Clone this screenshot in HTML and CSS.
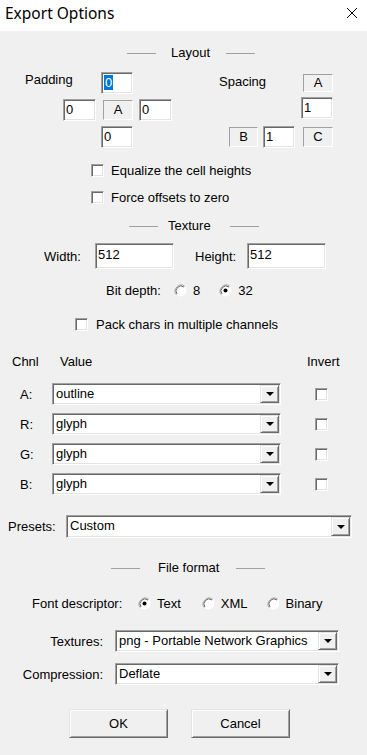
FILE: index.html
```html
<!DOCTYPE html>
<html lang="en">
<head>
  <meta charset="UTF-8" />
  <meta name="viewport" content="width=device-width, initial-scale=1.0"/>
  <title>Export Options</title>
  <link rel="stylesheet" href="styles.css">
</head>
<body>
  <div class="titlebar">
    <span class="title">Export Options</span>
    <svg class="close" width="12" height="12" viewBox="0 0 12 12"><path d="M1 1L11 11M11 1L1 11" stroke="#000" stroke-width="1" fill="none"/></svg>
  </div>

  <div class="dialog">
    <div class="group-title gt-layout">
      <span class="rule"></span><span class="gt-text">Layout</span><span class="rule"></span>
    </div>

    <div class="layout-block">
      <div class="pad-grid">
        <span class="pad-label">Padding</span>
        <div class="edit pad-top"><span class="sel">0</span></div>
        <div class="edit pad-left">0</div>
        <div class="static pad-a">A</div>
        <div class="edit pad-right">0</div>
        <div class="edit pad-bottom">0</div>
      </div>
      <div class="spc-grid">
        <span class="spc-label">Spacing</span>
        <div class="static spc-a">A</div>
        <div class="edit spc-v">1</div>
        <div class="static spc-b">B</div>
        <div class="edit spc-h">1</div>
        <div class="static spc-c">C</div>
      </div>
    </div>

    <div class="check-row row-equalize"><span class="check"></span><span>Equalize the cell heights</span></div>
    <div class="check-row row-offsets"><span class="check"></span><span>Force offsets to zero</span></div>

    <div class="group-title gt-texture">
      <span class="rule"></span><span class="gt-text">Texture</span><span class="rule"></span>
    </div>

    <div class="size-row">
      <span class="lbl-width">Width:</span>
      <div class="edit edit-big">512</div>
      <span class="lbl-height">Height:</span>
      <div class="edit edit-big">512</div>
    </div>

    <div class="bit-row">
      <span class="lbl-bit">Bit depth:</span>
      <span class="opt opt-8">
        <svg class="radio" width="13" height="13" viewBox="0 0 13 13"><circle cx="6.5" cy="6.5" r="6" fill="#fff"/><path d="M2.3 10.7A6 6 0 0 1 10.7 2.3" stroke="#a0a0a0" fill="none"/><path d="M3 10A5 5 0 0 1 10 3" stroke="#696969" fill="none"/></svg>
        <span>8</span>
      </span>
      <span class="opt opt-32">
        <svg class="radio" width="13" height="13" viewBox="0 0 13 13"><circle cx="6.5" cy="6.5" r="6" fill="#fff"/><path d="M2.3 10.7A6 6 0 0 1 10.7 2.3" stroke="#a0a0a0" fill="none"/><path d="M3 10A5 5 0 0 1 10 3" stroke="#696969" fill="none"/><circle cx="6.5" cy="6.5" r="2" fill="#000"/></svg>
        <span>32</span>
      </span>
    </div>

    <div class="check-row row-pack"><span class="check"></span><span>Pack chars in multiple channels</span></div>

    <div class="chnl-head">
      <span class="h-chnl">Chnl</span>
      <span class="h-value">Value</span>
      <span class="h-invert">Invert</span>
    </div>

    <div class="channels">
      <div class="chan">
        <span class="chan-lbl">A:</span>
        <div class="combo chan-combo"><span class="combo-val">outline</span><span class="drop"><svg width="8" height="4" viewBox="0 0 8 4"><path d="M0 0H8L4 4Z" fill="#000"/></svg></span></div>
        <span class="check chan-check"></span>
      </div>
      <div class="chan">
        <span class="chan-lbl">R:</span>
        <div class="combo chan-combo"><span class="combo-val">glyph</span><span class="drop"><svg width="8" height="4" viewBox="0 0 8 4"><path d="M0 0H8L4 4Z" fill="#000"/></svg></span></div>
        <span class="check chan-check"></span>
      </div>
      <div class="chan">
        <span class="chan-lbl">G:</span>
        <div class="combo chan-combo"><span class="combo-val">glyph</span><span class="drop"><svg width="8" height="4" viewBox="0 0 8 4"><path d="M0 0H8L4 4Z" fill="#000"/></svg></span></div>
        <span class="check chan-check"></span>
      </div>
      <div class="chan">
        <span class="chan-lbl">B:</span>
        <div class="combo chan-combo"><span class="combo-val">glyph</span><span class="drop"><svg width="8" height="4" viewBox="0 0 8 4"><path d="M0 0H8L4 4Z" fill="#000"/></svg></span></div>
        <span class="check chan-check"></span>
      </div>
    </div>

    <div class="presets-row">
      <span class="lbl-presets">Presets:</span>
      <div class="combo presets-combo"><span class="combo-val">Custom</span><span class="drop"><svg width="8" height="4" viewBox="0 0 8 4"><path d="M0 0H8L4 4Z" fill="#000"/></svg></span></div>
    </div>

    <div class="group-title gt-file">
      <span class="rule"></span><span class="gt-text">File format</span><span class="rule"></span>
    </div>

    <div class="fd-row">
      <span class="lbl-fd">Font descriptor:</span>
      <span class="opt">
        <svg class="radio" width="13" height="13" viewBox="0 0 13 13"><circle cx="6.5" cy="6.5" r="6" fill="#fff"/><path d="M2.3 10.7A6 6 0 0 1 10.7 2.3" stroke="#a0a0a0" fill="none"/><path d="M3 10A5 5 0 0 1 10 3" stroke="#696969" fill="none"/><circle cx="6.5" cy="6.5" r="2" fill="#000"/></svg>
        <span>Text</span>
      </span>
      <span class="opt opt-xml">
        <svg class="radio" width="13" height="13" viewBox="0 0 13 13"><circle cx="6.5" cy="6.5" r="6" fill="#fff"/><path d="M2.3 10.7A6 6 0 0 1 10.7 2.3" stroke="#a0a0a0" fill="none"/><path d="M3 10A5 5 0 0 1 10 3" stroke="#696969" fill="none"/></svg>
        <span>XML</span>
      </span>
      <span class="opt opt-bin">
        <svg class="radio" width="13" height="13" viewBox="0 0 13 13"><circle cx="6.5" cy="6.5" r="6" fill="#fff"/><path d="M2.3 10.7A6 6 0 0 1 10.7 2.3" stroke="#a0a0a0" fill="none"/><path d="M3 10A5 5 0 0 1 10 3" stroke="#696969" fill="none"/></svg>
        <span>Binary</span>
      </span>
    </div>

    <div class="format-row row-textures">
      <span class="lbl-format">Textures:</span>
      <div class="combo format-combo"><span class="combo-val">png - Portable Network Graphics</span><span class="drop"><svg width="8" height="4" viewBox="0 0 8 4"><path d="M0 0H8L4 4Z" fill="#000"/></svg></span></div>
    </div>
    <div class="format-row row-compression">
      <span class="lbl-format">Compression:</span>
      <div class="combo format-combo"><span class="combo-val">Deflate</span><span class="drop"><svg width="8" height="4" viewBox="0 0 8 4"><path d="M0 0H8L4 4Z" fill="#000"/></svg></span></div>
    </div>

    <div class="buttons">
      <div class="btn">OK</div>
      <div class="btn">Cancel</div>
    </div>
  </div>
</body>
</html>
```

FILE: styles.css
```css
* {
  margin: 0;
  padding: 0;
  box-sizing: border-box;
}

body {
  width: 367px;
  height: 755px;
  overflow: hidden;
  background: #f0f0f0;
  color: #000;
  font-family: "Liberation Sans", Arial, sans-serif;
  font-size: 13px;
}

/* title bar */
.titlebar {
  height: 31px;
  background: #fff;
  display: flex;
  align-items: flex-start;
  justify-content: space-between;
  padding: 2px 9px 0 5px;
}

.title {
  font-family: "Noto Sans", sans-serif;
  font-size: 15.5px;
}

.close {
  margin-top: 5px;
}

.dialog {
  display: flex;
  flex-direction: column;
}

/* etched section titles */
.group-title {
  display: flex;
  align-items: center;
  height: 16px;
  line-height: 16px;
}

.rule {
  width: 29px;
  height: 1px;
  background: #a0a0a0;
}

.gt-layout { margin: 14px 0 0 127px; }
.gt-layout .gt-text { margin: 0 16px 0 15px; }

.gt-texture { margin: 11px 0 0 129px; }
.gt-texture .gt-text { margin: 0 19px 0 10px; }

.gt-file { margin: 22px 0 0 111px; }
.gt-file .gt-text { margin: 0 17px 0 18px; }

/* win classic controls */
.edit {
  height: 22px;
  background: #fff;
  border: 1px solid;
  border-color: #a0a0a0 #fff #fff #a0a0a0;
  box-shadow: inset 1px 1px 0 #696969, inset -1px -1px 0 #e3e3e3;
  padding: 2px 0 0 2px;
  line-height: 16px;
  white-space: nowrap;
}

.sel {
  background: #0078d7;
  color: #fff;
  padding: 0 1px;
}

.static {
  height: 20px;
  align-self: center;
  border: 1px solid;
  border-color: #a0a0a0 #fff #fff #a0a0a0;
  text-align: center;
  line-height: 18px;
}

.check {
  width: 13px;
  height: 13px;
  flex: none;
  background: #fff;
  border: 1px solid;
  border-color: #a0a0a0 #fff #fff #a0a0a0;
  box-shadow: inset 1px 1px 0 #696969, inset -1px -1px 0 #e3e3e3;
}

.radio {
  display: block;
  flex: none;
}

.combo {
  display: flex;
  align-items: stretch;
  height: 22px;
  padding: 1px;
  background: #fff;
  border: 1px solid;
  border-color: #a0a0a0 #fff #fff #a0a0a0;
  box-shadow: inset 1px 1px 0 #696969, inset -1px -1px 0 #e3e3e3;
}

.combo-val {
  flex: 1;
  padding: 1px 0 0 2px;
  line-height: 16px;
  white-space: nowrap;
  overflow: hidden;
}

.drop {
  width: 19px;
  display: flex;
  align-items: center;
  justify-content: center;
  background: #f0f0f0;
  border: 1px solid;
  border-color: #e3e3e3 #696969 #696969 #e3e3e3;
  box-shadow: inset 1px 1px 0 #fff, inset -1px -1px 0 #a0a0a0;
}

.drop svg {
  display: block;
}

/* layout section */
.layout-block {
  display: flex;
  margin-top: 11px;
}

.pad-grid {
  display: grid;
  grid-template-columns: 71px 5px 32px 6px 33px;
  grid-template-rows: repeat(3, 22px);
  row-gap: 5px;
  margin-left: 25px;
}

.pad-label {
  grid-column: 1;
  grid-row: 1;
  line-height: 15px;
}

.pad-top { grid-column: 3; grid-row: 1; }
.pad-left { grid-column: 1; grid-row: 2; width: 33px; justify-self: end; }
.pad-a { grid-column: 3; grid-row: 2; width: 30px; justify-self: end; }
.pad-right { grid-column: 5; grid-row: 2; }
.pad-bottom { grid-column: 3; grid-row: 3; }

.spc-grid {
  display: grid;
  grid-template-columns: 10px 29px 5px 32px 6px 32px;
  grid-template-rows: repeat(3, 22px);
  row-gap: 5px;
  margin-left: 47px;
}

.spc-label {
  grid-column: 1 / span 4;
  grid-row: 1;
  line-height: 15px;
  margin-top: 2px;
}

.spc-a { grid-column: 6; grid-row: 1; width: 30px; height: 18px; line-height: 16px; justify-self: end; }
.spc-v { grid-column: 6; grid-row: 2; margin-top: -2px; }
.spc-b { grid-column: 2; grid-row: 3; }
.spc-h { grid-column: 4; grid-row: 3; }
.spc-c { grid-column: 6; grid-row: 3; width: 30px; justify-self: end; }

/* checkbox rows */
.check-row {
  display: flex;
  align-items: center;
  height: 20px;
}

.row-equalize { margin: 12px 0 0 91px; gap: 7px; }
.row-offsets { margin: 7px 0 0 91px; gap: 7px; }
.row-pack { margin: 14px 0 0 75px; gap: 8px; }

/* texture */
.size-row {
  display: flex;
  align-items: center;
  height: 26px;
  margin-top: 9px;
}

.edit-big {
  width: 79px;
  height: 26px;
  padding-top: 3px;
}

.lbl-width { margin-left: 44px; width: 51px; }
.lbl-height { margin-left: 21px; width: 52px; }

.bit-row {
  display: flex;
  align-items: center;
  height: 20px;
  margin-top: 11px;
}

.lbl-bit { margin-left: 106px; width: 68px; }

.opt {
  display: flex;
  align-items: center;
  gap: 6px;
}

.opt-32 { margin-left: 19px; }

/* channels */
.chnl-head {
  display: flex;
  height: 16px;
  line-height: 16px;
  margin-top: 20px;
}

.h-chnl { margin-left: 12px; width: 48px; }
.h-value { width: 247px; }

.channels {
  display: flex;
  flex-direction: column;
  gap: 8px;
  margin-top: 13px;
}

.chan {
  display: flex;
  align-items: center;
  height: 22px;
}

.chan-lbl { margin-left: 20px; width: 32px; }
.chan-combo { width: 229px; }
.chan-check { margin-left: 34px; }

.presets-row {
  display: flex;
  align-items: center;
  margin-top: 20px;
}

.lbl-presets { margin-left: 8px; width: 58px; }
.presets-combo { width: 286px; height: 23px; }

/* file format */
.fd-row {
  display: flex;
  align-items: center;
  height: 20px;
  margin-top: 17px;
}

.lbl-fd { margin-left: 32px; width: 106px; }
.opt-xml { margin-left: 21px; }
.opt-bin { margin-left: 19px; }

.format-row {
  display: flex;
  align-items: center;
}

.row-textures { margin-top: 17px; }
.row-compression { margin-top: 11px; }

.lbl-format { width: 103px; text-align: right; }
.format-combo { width: 224px; margin-left: 12px; }

/* buttons */
.buttons {
  display: flex;
  gap: 23px;
  margin: 24px 0 0 69px;
}

.btn {
  width: 99px;
  height: 29px;
  line-height: 27px;
  text-align: center;
  background: #f0f0f0;
  border: 1px solid;
  border-color: #e3e3e3 #696969 #696969 #e3e3e3;
  box-shadow: inset 1px 1px 0 #fff, inset -1px -1px 0 #a0a0a0;
}
```
